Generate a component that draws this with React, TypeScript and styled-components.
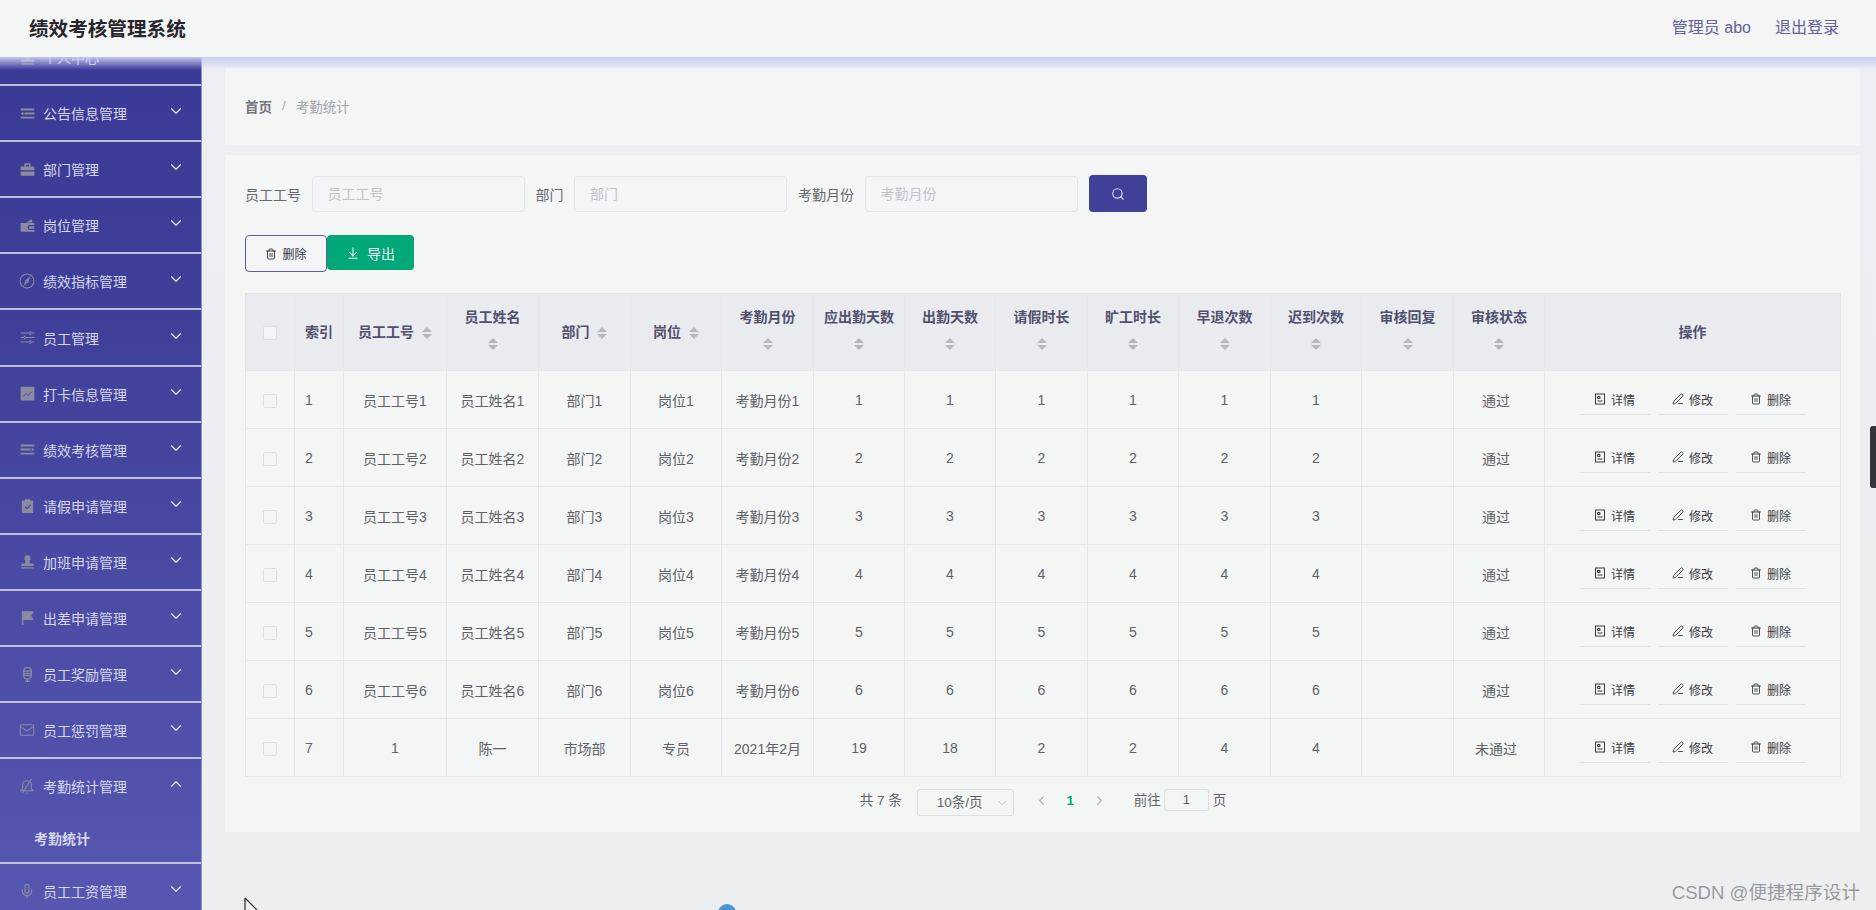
import React from "react";
import styled, { createGlobalStyle } from "styled-components";
import {
  ArrowDownToLine,
  ChevronDown,
  ChevronLeft,
  ChevronRight,
  ChevronUp,
  Mail,
  Mic,
  PenLine,
  Search,
  Trash2,
} from "lucide-react";

const FONT = `"Liberation Sans", "Noto Sans CJK SC", sans-serif`;

const GlobalStyle = createGlobalStyle`
  html, body {
    margin: 0;
    padding: 0;
    background: #eeeff1;
    font-family: ${FONT};
  }
  * { box-sizing: border-box; }
`;

const Page = styled.div`
  position: relative;
  display: flex;
  flex-direction: column;
  height: 910px;
  overflow: hidden;
  background: linear-gradient(180deg, #eeeff2 0%, #edeef0 100%);
`;

const TopBar = styled.header`
  position: relative;
  z-index: 2;
  display: flex;
  flex: 0 0 57px;
  align-items: center;
  justify-content: space-between;
  padding: 0 37px 3px 29px;
  background: #f4f5f5;

  &::after {
    content: "";
    position: absolute;
    left: 0;
    right: 0;
    top: 100%;
    height: 13px;
    background: linear-gradient(180deg, rgba(203, 203, 243, 0.95), rgba(214, 214, 245, 0));
    pointer-events: none;
  }
`;

const Title = styled.h1`
  margin: 0;
  font-size: 19.6px;
  font-weight: 700;
  color: #26262c;
`;

const UserBox = styled.div`
  display: flex;
  gap: 24px;
  margin-bottom: 2px;
  font-size: 16px;
  color: #62629c;
`;

const Main = styled.div`
  display: flex;
  flex: 1;
  min-height: 0;
`;

const Sidebar = styled.aside`
  flex: 0 0 202px;
  overflow: hidden;
  border-right: 1px solid #8f90cf;
  background: linear-gradient(180deg, #3a3b96 0%, #3e3f99 30%, #4a4ca6 65%, #5557b0 100%);
`;

const Menu = styled.ul`
  margin: -27px 0 0;
  padding: 0;
  list-style: none;
`;

const MenuItem = styled.li`
  border-bottom: 2px solid rgba(226, 226, 238, 0.78);
`;

const MenuTitle = styled.div`
  display: flex;
  align-items: center;
  height: 54.1px;
  padding: 0 16px 0 20px;
  font-size: 14px;
  color: #d6d6ea;
`;

const IconSlot = styled.span`
  display: inline-flex;
  flex: 0 0 14px;
  justify-content: center;
  min-width: 0;
  margin-right: 9px;
  color: #8a8ba0;

  svg {
    flex-shrink: 0;
  }
`;

const Chevron = styled.span`
  display: inline-flex;
  margin: -4px 0 0 auto;
  color: #e0e0f0;
`;

const SubItem = styled.div`
  display: flex;
  align-items: center;
  height: 49px;
  padding-left: 34px;
  font-size: 14px;
  font-weight: 700;
  color: #d6d6ea;
`;

const Content = styled.main`
  flex: 1;
  min-width: 0;
  padding: 11px 16px 0 23px;
`;

const BreadcrumbCard = styled.nav`
  display: flex;
  align-items: center;
  height: 77px;
  padding: 0 0 2px 20px;
  background: #f4f5f5;
  font-size: 13.5px;
`;

const CrumbHome = styled.span`
  font-weight: 700;
  color: #74767c;
`;

const CrumbSep = styled.span`
  margin: 0 10px;
  color: #a8aab0;
`;

const CrumbCurrent = styled.span`
  color: #a2a4aa;
`;

const TableCard = styled.section`
  margin-top: 10px;
  padding: 20px 19px 16px 20px;
  background: #f4f5f5;
`;

const FilterRow = styled.div`
  display: flex;
  align-items: center;
`;

const Field = styled.label`
  display: flex;
  align-items: center;
  gap: 10.5px;
  margin-right: 11px;
  font-size: 14px;
  color: #66686e;
`;

const TextInput = styled.input`
  width: 213px;
  height: 36px;
  padding: 0 15px;
  border: 1px solid #e3e5ea;
  border-radius: 4px;
  background: #f4f5f6;
  font-family: ${FONT};
  font-size: 14px;

  &::placeholder {
    color: #c0c3ca;
    opacity: 1;
  }
`;

const SearchButton = styled.button`
  display: flex;
  align-items: center;
  justify-content: center;
  width: 58px;
  height: 37px;
  border: 0;
  border-radius: 4px;
  background: #3f4199;
  color: #d9d9f2;
`;

const ActionRow = styled.div`
  display: flex;
  align-items: flex-start;
  margin: 23px 0 21px;
`;

const OutlineButton = styled.button`
  display: flex;
  align-items: center;
  justify-content: center;
  gap: 5px;
  width: 82px;
  height: 37px;
  padding: 0;
  border: 1px solid #5e5f96;
  border-radius: 4px;
  background: #f5f5f7;
  font-family: ${FONT};
  font-size: 12px;
  color: #33343a;
`;

const ExportButton = styled.button`
  display: flex;
  align-items: center;
  justify-content: center;
  gap: 7px;
  width: 87px;
  height: 35px;
  padding: 0;
  border: 0;
  border-radius: 4px;
  background: #02a878;
  font-family: ${FONT};
  font-size: 14px;
  color: #e6f8f1;
`;

const Table = styled.table`
  width: 1595px;
  border-collapse: collapse;
  table-layout: fixed;
`;

const Th = styled.th<{ $wrapped?: boolean }>`
  height: 77px;
  padding: 0 10px ${(p) => (p.$wrapped ? "5px" : "0")};
  border: 1px solid #e5e6ea;
  background: #eaebee;
  font-size: 14px;
  font-weight: 700;
  line-height: 26px;
  word-spacing: 4px;
  color: #50516e;
  text-align: center;
`;

const HeadText = styled.span`
  white-space: nowrap;
`;

const Sort = styled.span`
  display: inline-block;
  width: 10px;
  height: 12px;
  vertical-align: middle;
`;

const Caret = styled.i<{ $down?: boolean }>`
  display: block;
  width: 0;
  height: 0;
  margin-top: ${(p) => (p.$down ? "2px" : "0")};
  border-left: 5px solid transparent;
  border-right: 5px solid transparent;
  ${(p) => (p.$down ? "border-top: 5px solid #b6b7bf;" : "border-bottom: 5px solid #b6b7bf;")}
`;

const Td = styled.td<{ $left?: boolean }>`
  height: 58px;
  padding: ${(p) => (p.$left ? "0 0 0 10px" : "0")};
  border: 1px solid #e5e6ea;
  font-size: 14px;
  color: #606266;
  text-align: ${(p) => (p.$left ? "left" : "center")};
`;

const StatusText = styled.span`
  margin-right: 6px;
`;

const CheckBox = styled.span`
  display: inline-block;
  width: 14px;
  height: 14px;
  border: 1px solid #dddee3;
  border-radius: 2px;
  background: #f5f5f6;
  vertical-align: middle;
`;

const RowActions = styled.div`
  display: flex;
  justify-content: center;
  gap: 8px;
`;

const RowButton = styled.button`
  display: flex;
  align-items: center;
  justify-content: center;
  gap: 5px;
  width: 70px;
  height: 30px;
  padding: 0;
  border: 0;
  border-bottom: 1px solid #e0e2e6;
  background: transparent;
  font-family: ${FONT};
  font-size: 12px;
  color: #3a3b40;
`;

const Pagination = styled.div`
  display: flex;
  align-items: flex-start;
  justify-content: center;
  margin-top: 12px;
  font-size: 13.5px;
  line-height: 23px;
  color: #606266;
`;

const PageSize = styled.div`
  display: flex;
  align-items: center;
  width: 97px;
  height: 27px;
  margin: 0 13px 0 15px;
  padding-left: 19px;
  border: 1px solid #dcdee3;
  border-radius: 3px;
  color: #606266;
`;

const PageSizeArrow = styled.span`
  display: inline-flex;
  margin-left: auto;
  margin-right: 4px;
  color: #c0c4cc;
`;

const Pager = styled.span<{ $active?: boolean }>`
  display: inline-flex;
  align-items: center;
  justify-content: center;
  width: 29px;
  height: 23px;
  font-weight: 700;
  color: ${(p) => (p.$active ? "#02a878" : "#b4b6bc")};
`;

const JumpInput = styled.div`
  width: 45px;
  height: 22px;
  margin: 0 4px 0 3px;
  border: 1px solid #dcdee3;
  border-radius: 3px;
  font-size: 13px;
  line-height: 20px;
  text-align: center;
`;

const JumpLabel = styled.span`
  margin-left: 20px;
`;

const ScrollThumb = styled.div`
  position: absolute;
  top: 426px;
  right: 0;
  width: 6px;
  height: 62px;
  border-radius: 3px 0 0 3px;
  background: #33353a;
`;

const Watermark = styled.div`
  position: absolute;
  right: 16px;
  bottom: 5px;
  font-size: 18.6px;
  line-height: 24px;
  color: #97989c;
  text-shadow: 0 0 1px #ffffff;
`;

const CursorMark = styled.svg`
  position: absolute;
  left: 244px;
  top: 897px;
`;

const BlueDot = styled.span`
  position: absolute;
  left: 718px;
  top: 904px;
  width: 18px;
  height: 18px;
  border-radius: 50%;
  background: #4a93d6;
`;

type IconProps = { children: React.ReactNode };

const Glyph = ({ children }: IconProps) => (
  <svg width="15" height="15" viewBox="0 0 24 24" fill="currentColor" fillRule="evenodd">
    {children}
  </svg>
);

const StampIcon = () => (
  <Glyph>
    <path d="M12 2a5 5 0 0 1 3 9l1 4h5a1 1 0 0 1 1 1v3H2v-3a1 1 0 0 1 1-1h5l1-4a5 5 0 0 1 3-9zM2 21h20v2H2z" />
  </Glyph>
);

const FoldIcon = () => (
  <Glyph>
    <path d="M1 4h22v3H1zM7 10.5h16v3H7zM1 17h22v3H1zM1 12l4.5-3v6z" />
  </Glyph>
);

const BriefcaseIcon = () => (
  <Glyph>
    <path d="M7 7V4a2 2 0 0 1 2-2h6a2 2 0 0 1 2 2v3h5a1 1 0 0 1 1 1v5H1V8a1 1 0 0 1 1-1zM9.5 4.5V7h5V4.5zM1 15h22v6a1 1 0 0 1-1 1H2a1 1 0 0 1-1-1z" />
  </Glyph>
);

const WalletIcon = () => (
  <Glyph>
    <path d="M1 8h22v3h-7a4 4 0 0 0 0 8h7v3H1zM23 13v4h-7a2 2 0 0 1 0-4zM9 7l10-5 1 5z" />
  </Glyph>
);

const CompassIcon = () => (
  <svg width="16" height="16" viewBox="0 0 24 24" fill="none" stroke="currentColor" strokeWidth="1.6">
    <circle cx="12" cy="12" r="10.5" />
    <path d="M15.5 7 13.2 13.2 10.8 11z" fill="currentColor" />
    <path d="M10.8 11 8.5 17l4.7-3.8" />
  </svg>
);

const SlidersIcon = () => (
  <Glyph>
    <path d="M1 4h22v1.6H1zM1 11.2h22v1.6H1zM1 18.4h22V20H1zM15 2h3v5.6h-3zM6 9.2h3v5.6H6zM15 16.4h3V22h-3z" />
  </Glyph>
);

const ChartIcon = () => (
  <svg width="15" height="15" viewBox="0 0 24 24">
    <rect x="1" y="1" width="22" height="22" rx="1" fill="currentColor" />
    <path d="M5 17l5-5 3 3 6-6" fill="none" stroke="#4a4b8c" strokeWidth="1.6" />
  </svg>
);

const UnfoldIcon = () => (
  <Glyph>
    <path d="M1 4h22v3H1zM1 10.5h16v3H1zM1 17h22v3H1zM23 12l-4.5-3v6z" />
  </Glyph>
);

const ClaimIcon = () => (
  <svg width="15" height="15" viewBox="0 0 24 24">
    <path d="M3 4h5V2h8v2h5v20H3z" fill="currentColor" />
    <path d="M8 14l3 3 6-6" fill="none" stroke="#45479c" strokeWidth="2" />
  </svg>
);

const FlagIcon = () => (
  <Glyph>
    <path d="M3 1h2.5v23H3zM5.5 2H22l-4 7 4 7H5.5z" />
  </Glyph>
);

const MicLinesIcon = () => (
  <svg width="15" height="15" viewBox="0 0 24 24" fill="none" stroke="currentColor" strokeWidth="2">
    <rect x="6" y="1" width="12" height="18" rx="5" />
    <path d="M6 6.5h12M6 10h12M6 13.5h12M12 19v3M8 23h8" />
  </svg>
);

const BellSlashIcon = () => (
  <svg width="16" height="16" viewBox="0 0 24 24" fill="none" stroke="currentColor" strokeWidth="1.6">
    <path d="M12 4a6.5 6.5 0 0 0-6.5 6.5V16L3 19h18l-2.5-3v-5.5A6.5 6.5 0 0 0 12 4z" />
    <path d="M19 1 5 22M11 23h2" />
  </svg>
);

const TicketIcon = () => (
  <svg width="12" height="12" viewBox="0 0 24 24" fill="none" stroke="currentColor" strokeWidth="2">
    <rect x="3" y="2" width="18" height="20" />
    <path d="M7 7h5v4H7zM7 16h10" />
  </svg>
);

const menus = [
  { label: "个人中心", icon: <StampIcon /> },
  { label: "公告信息管理", icon: <FoldIcon /> },
  { label: "部门管理", icon: <BriefcaseIcon /> },
  { label: "岗位管理", icon: <WalletIcon /> },
  { label: "绩效指标管理", icon: <CompassIcon /> },
  { label: "员工管理", icon: <SlidersIcon /> },
  { label: "打卡信息管理", icon: <ChartIcon /> },
  { label: "绩效考核管理", icon: <UnfoldIcon /> },
  { label: "请假申请管理", icon: <ClaimIcon /> },
  { label: "加班申请管理", icon: <StampIcon /> },
  { label: "出差申请管理", icon: <FlagIcon /> },
  { label: "员工奖励管理", icon: <MicLinesIcon /> },
  { label: "员工惩罚管理", icon: <Mail size={16} strokeWidth={1.6} /> },
  { label: "考勤统计管理", icon: <BellSlashIcon />, sub: "考勤统计" },
  { label: "员工工资管理", icon: <Mic size={16} strokeWidth={1.8} /> },
];

const columnWidths = [49, 49, 103, 92, 92, 91, 92, 91, 91, 92, 91, 92, 91, 92, 91, 296];

const sortableColumns = [
  { name: "员工工号" },
  { name: "员工姓名", wrapped: true },
  { name: "部门" },
  { name: "岗位" },
  { name: "考勤月份", wrapped: true },
  { name: "应出勤天数", wrapped: true },
  { name: "出勤天数", wrapped: true },
  { name: "请假时长", wrapped: true },
  { name: "旷工时长", wrapped: true },
  { name: "早退次数", wrapped: true },
  { name: "迟到次数", wrapped: true },
  { name: "审核回复", wrapped: true },
  { name: "审核状态", wrapped: true },
];

const sampleRows = [1, 2, 3, 4, 5, 6].map((n) => [
  `${n}`,
  `员工工号${n}`,
  `员工姓名${n}`,
  `部门${n}`,
  `岗位${n}`,
  `考勤月份${n}`,
  `${n}`,
  `${n}`,
  `${n}`,
  `${n}`,
  `${n}`,
  `${n}`,
  "",
  "通过",
]);

const rows = [
  ...sampleRows,
  ["7", "1", "陈一", "市场部", "专员", "2021年2月", "19", "18", "2", "2", "4", "4", "", "未通过"],
];

const App = () => {
  return (
    <Page>
      <GlobalStyle />
      <TopBar>
        <Title>绩效考核管理系统</Title>
        <UserBox>
          <span>管理员 abo</span>
          <span>退出登录</span>
        </UserBox>
      </TopBar>
      <Main>
        <Sidebar>
          <Menu>
            {menus.map((menu) => (
              <MenuItem key={menu.label}>
                <MenuTitle>
                  <IconSlot>{menu.icon}</IconSlot>
                  {menu.label}
                  <Chevron>
                    {menu.sub ? <ChevronUp size={18} strokeWidth={1.6} /> : <ChevronDown size={18} strokeWidth={1.6} />}
                  </Chevron>
                </MenuTitle>
                {menu.sub && <SubItem>{menu.sub}</SubItem>}
              </MenuItem>
            ))}
          </Menu>
        </Sidebar>
        <Content>
          <BreadcrumbCard>
            <CrumbHome>首页</CrumbHome>
            <CrumbSep>/</CrumbSep>
            <CrumbCurrent>考勤统计</CrumbCurrent>
          </BreadcrumbCard>
          <TableCard>
            <FilterRow>
              <Field>
                员工工号
                <TextInput placeholder="员工工号" />
              </Field>
              <Field>
                部门
                <TextInput placeholder="部门" />
              </Field>
              <Field>
                考勤月份
                <TextInput placeholder="考勤月份" />
              </Field>
              <SearchButton>
                <Search size={14} strokeWidth={2} />
              </SearchButton>
            </FilterRow>
            <ActionRow>
              <OutlineButton>
                <Trash2 size={12} strokeWidth={1.8} />
                删除
              </OutlineButton>
              <ExportButton>
                <ArrowDownToLine size={14} strokeWidth={1.8} />
                导出
              </ExportButton>
            </ActionRow>
            <Table>
              <colgroup>
                {columnWidths.map((width, i) => (
                  <col key={i} width={width} />
                ))}
              </colgroup>
              <thead>
                <tr>
                  <Th>
                    <CheckBox />
                  </Th>
                  <Th>索引</Th>
                  {sortableColumns.map((column) => (
                    <Th key={column.name} $wrapped={column.wrapped}>
                      <HeadText>{column.name}</HeadText>{" "}
                      <Sort>
                        <Caret />
                        <Caret $down />
                      </Sort>
                    </Th>
                  ))}
                  <Th>操作</Th>
                </tr>
              </thead>
              <tbody>
                {rows.map((row) => (
                  <tr key={row[0]}>
                    <Td>
                      <CheckBox />
                    </Td>
                    {row.map((value, i) => (
                      <Td key={i} $left={i === 0}>
                        {i === row.length - 1 ? <StatusText>{value}</StatusText> : value}
                      </Td>
                    ))}
                    <Td>
                      <RowActions>
                        <RowButton>
                          <TicketIcon />
                          详情
                        </RowButton>
                        <RowButton>
                          <PenLine size={12} strokeWidth={1.8} />
                          修改
                        </RowButton>
                        <RowButton>
                          <Trash2 size={12} strokeWidth={1.8} />
                          删除
                        </RowButton>
                      </RowActions>
                    </Td>
                  </tr>
                ))}
              </tbody>
            </Table>
            <Pagination>
              <span>共 7 条</span>
              <PageSize>
                10条/页
                <PageSizeArrow>
                  <ChevronDown size={14} strokeWidth={1.6} />
                </PageSizeArrow>
              </PageSize>
              <Pager>
                <ChevronLeft size={15} strokeWidth={2} />
              </Pager>
              <Pager $active>1</Pager>
              <Pager>
                <ChevronRight size={15} strokeWidth={2} />
              </Pager>
              <JumpLabel>前往</JumpLabel>
              <JumpInput>1</JumpInput>
              <span>页</span>
            </Pagination>
          </TableCard>
        </Content>
      </Main>
      <ScrollThumb />
      <BlueDot />
      <CursorMark width="14" height="14" viewBox="0 0 14 14">
        <path d="M1 1v12M1 1l12 12" fill="none" stroke="#2a2b30" strokeWidth="1.2" />
      </CursorMark>
      <Watermark>CSDN @便捷程序设计</Watermark>
    </Page>
  );
};

export default App;
